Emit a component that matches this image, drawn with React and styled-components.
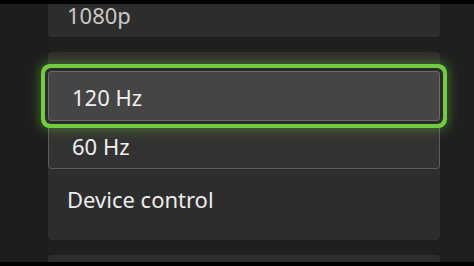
import styled, { createGlobalStyle } from "styled-components";

const GlobalStyle = createGlobalStyle`
  html, body {
    margin: 0;
    padding: 0;
    background: #1f1f1f;
  }
  body {
    font-family: "Noto Sans", "Open Sans", "DejaVu Sans", sans-serif;
  }
`;

const Screen = styled.div`
  width: 474px;
  height: 266px;
  display: flex;
  flex-direction: column;
  overflow: hidden;
  background: #1f1f1f;
`;

const Letterbox = styled.div`
  height: ${(p) => p.$h}px;
  flex: none;
  background: #000;
`;

const Main = styled.div`
  flex: 1;
  display: flex;
  min-height: 0;
`;

const SidePane = styled.div`
  width: 48px;
  flex: none;
  background: #1d1d1d;
`;

const Column = styled.div`
  width: 392px;
  flex: none;
  display: flex;
  flex-direction: column;
  gap: 15px;
`;

const Card = styled.div`
  flex: none;
  height: ${(p) => p.$h}px;
  background: #2d2d2d;
  border-radius: ${(p) => p.$radius || "4px"};
  display: flex;
  flex-direction: column;
`;

const ValueText = styled.div`
  padding: 0 0 0 19px;
  font-size: 22px;
  line-height: 28px;
  color: ${(p) => (p.$dim ? "#c9c9c9" : "#ececec")};
  margin-top: ${(p) => p.$top || 0}px;
`;

const OptionList = styled.div`
  margin-top: 19px;
  display: flex;
  flex-direction: column;
`;

const Option = styled.div`
  height: ${(p) => p.$h}px;
  box-sizing: border-box;
  display: flex;
  align-items: center;
  padding: 2px 0 0 23px;
  font-size: 22px;
  color: #f0f0f0;
  background: ${(p) => (p.$focused ? "#454545" : "#323232")};
  border: 1px solid ${(p) => (p.$focused ? "#6a6a6a" : "#5c5c5c")};
  border-top: ${(p) => (p.$focused ? "1px solid #6a6a6a" : "none")};
  border-radius: ${(p) => (p.$focused ? "3px" : "0 0 4px 4px")};
  position: relative;
  z-index: ${(p) => (p.$focused ? 2 : 1)};
  box-shadow: ${(p) =>
    p.$focused
      ? "0 0 0 3px #2b2b2b, 0 0 0 7px #72cc40, 0 0 12px 9px rgba(104, 196, 52, 0.4)"
      : "none"};
`;

const SettingRow = styled.div`
  flex: 1;
  display: flex;
  align-items: flex-start;
`;

export default function App() {
  return (
    <>
      <GlobalStyle />
      <Screen>
        <Letterbox $h={4} />
        <Main>
          <SidePane />
          <Column>
            <Card $h={33} $radius="0 0 4px 4px">
              <ValueText $dim $top={-3}>1080p</ValueText>
            </Card>
            <Card $h={188}>
              <OptionList>
                <Option $focused $h={50}>120 Hz</Option>
                <Option $h={48}>60 Hz</Option>
              </OptionList>
              <SettingRow>
                <ValueText $top={16}>Device control</ValueText>
              </SettingRow>
            </Card>
            <Card $h={10} $radius="4px 4px 0 0" />
          </Column>
        </Main>
        <Letterbox $h={4} />
      </Screen>
    </>
  );
}
